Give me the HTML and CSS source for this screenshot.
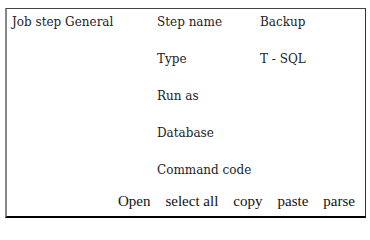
FILE: index.html
```html
<!DOCTYPE html>
<html>
<head>
<meta charset="utf-8">
<link rel="stylesheet" href="styles.css">
</head>
<body>
<div class="panel">
  <div class="grid">
    <div class="title">Job step General</div>
    <div class="label">Step name</div>
    <div class="value">Backup</div>
    <div class="spacer"></div>
    <div class="label">Type</div>
    <div class="value">T - SQL</div>
    <div class="spacer"></div>
    <div class="label">Run as</div>
    <div class="value"></div>
    <div class="spacer"></div>
    <div class="label">Database</div>
    <div class="value"></div>
    <div class="spacer"></div>
    <div class="label wide">Command code</div>
  </div>
  <div class="actions">
    <span>Open</span>
    <span>select all</span>
    <span>copy</span>
    <span>paste</span>
    <span>parse</span>
  </div>
</div>
</body>
</html>
```
FILE: styles.css
```css
html, body {
  margin: 0;
  padding: 0;
  background: #fff;
}
body {
  padding: 8px 0 0 5px;
}
.panel {
  box-sizing: border-box;
  width: 361px;
  height: 210px;
  border-top: 1px solid #444;
  border-right: 1px solid #333;
  border-bottom: 2px solid #000;
  border-left: 2px solid #888;
  font-family: "DejaVu Serif", Georgia, serif;
  font-size: 12px;
  color: #222;
  display: flex;
  flex-direction: column;
}
.grid {
  display: grid;
  grid-template-columns: 145px 103px 1fr;
  grid-template-rows: repeat(4, 37px) auto;
  padding: 5px 0 0 5px;
  align-items: start;
}
.title, .label, .value {
  line-height: 16px;
}
.wide {
  grid-column: 2 / span 2;
}
.actions {
  margin-top: auto;
  display: flex;
  justify-content: flex-end;
  gap: 15px;
  padding: 0 10px 6px 0;
  font-family: "Liberation Serif", "Times New Roman", serif;
  font-size: 15px;
  line-height: 18px;
  color: #111;
}
```
